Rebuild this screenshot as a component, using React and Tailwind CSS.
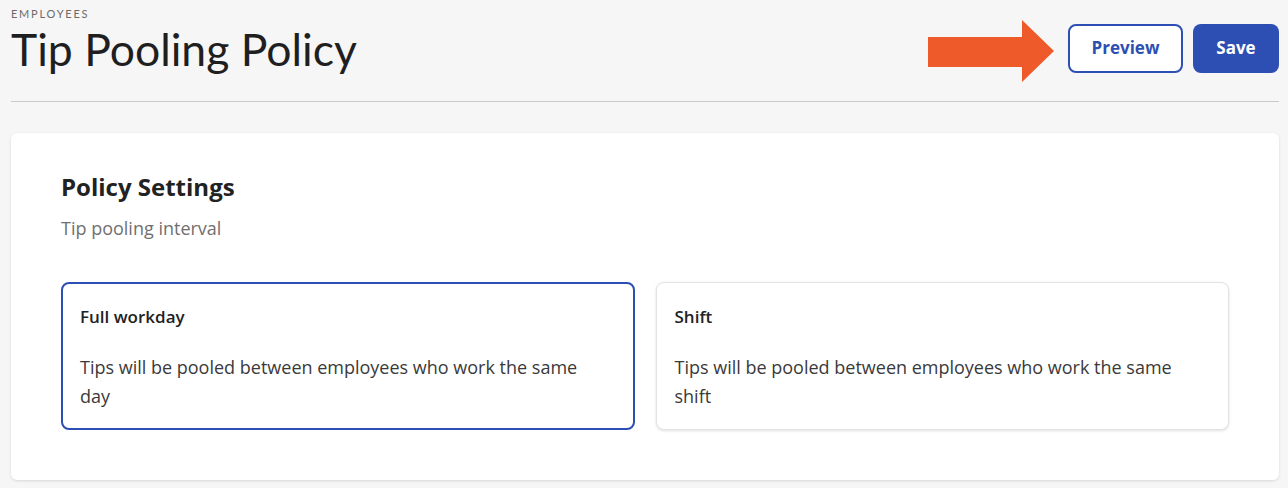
const OptionCard = ({ title, text, selected }) => (
  <div
    className={
      selected
        ? "rounded-lg border-2 border-[#2d4fb3] bg-white pl-[17px] pr-10 pt-[21px] pb-[17px]"
        : "rounded-lg border border-[#e3e3e3] bg-white pl-[18px] pr-10 pt-[22px] pb-[18px] shadow-[0_1px_3px_rgba(0,0,0,0.12)]"
    }
  >
    <h3 className="text-[17px] font-semibold leading-6 text-[#222]">{title}</h3>
    <p className="mt-[24px] text-[18px] leading-[29px] text-[#3a3a3a]">{text}</p>
  </div>
);

export default function App() {
  return (
    <div className="min-h-[488px] bg-[#f6f6f6] pl-[11px] pr-[9px] font-['Open_Sans',sans-serif]">
      {/* Header */}
      <div className="flex items-start justify-between border-b border-[#c9c9c9] pb-[19px]">
        <div className="pt-[6px] font-['Lato',sans-serif]">
          <div className="text-[11px] leading-4 tracking-[0.16em] text-[#6b6b6b]">EMPLOYEES</div>
          <h1 className="mt-[-1px] text-[44.5px] leading-[56px] text-[#1f1f1f]">Tip Pooling Policy</h1>
        </div>
        <div className="flex items-center pt-[14px]">
          <svg width="126" height="62" viewBox="0 0 126 62" className="mr-[14px] mt-[6px]">
            <polygon points="0,17 94,17 94,0 126,31 94,62 94,47 0,47" fill="#ee5a2a" />
          </svg>
          <button className="h-[49px] w-[115px] rounded-lg border-2 border-[#2d4fb3] bg-white text-[17px] font-bold text-[#2d4fb3]">
            Preview
          </button>
          <button className="ml-[10px] h-[49px] w-[86px] rounded-lg bg-[#2d4fb3] text-[17px] font-bold text-white">
            Save
          </button>
        </div>
      </div>

      {/* Settings card */}
      <div className="mt-[31px] rounded-md bg-white px-[50px] pt-[40px] pb-[50px] shadow-[0_1px_3px_rgba(0,0,0,0.12)]">
        <h2 className="text-[24px] font-bold leading-7 text-[#222]">Policy Settings</h2>
        <p className="mt-[15px] text-[18px] leading-6 text-[#707070]">Tip pooling interval</p>
        <div className="mt-[42px] grid grid-cols-2 gap-[21px]">
          <OptionCard
            selected
            title="Full workday"
            text="Tips will be pooled between employees who work the same day"
          />
          <OptionCard
            title="Shift"
            text="Tips will be pooled between employees who work the same shift"
          />
        </div>
      </div>
    </div>
  );
}
